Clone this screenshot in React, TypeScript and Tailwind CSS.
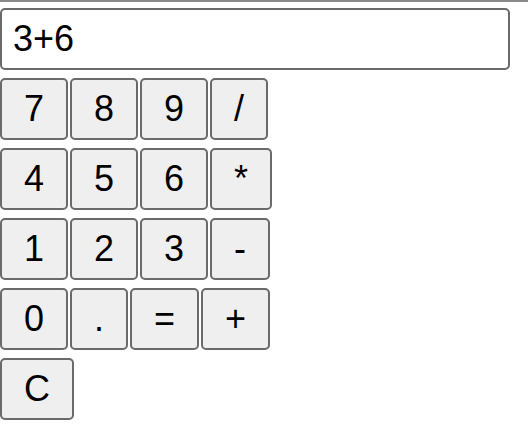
import React from "react";

const rows: string[][] = [
  ["7", "8", "9", "/"],
  ["4", "5", "6", "*"],
  ["1", "2", "3", "-"],
  ["0", ".", "=", "+"],
  ["C"],
];

export default function App() {
  return (
    <div className="w-[528px] h-[443px] bg-white overflow-hidden" style={{ fontFamily: '"Liberation Sans", Arial, sans-serif' }}>
      <div className="h-[2px] w-full bg-[#8a8a8a]" />
      <div className="flex flex-col gap-2 pt-[6px]">
        <div className="w-[510px] h-[62px] border-2 border-[#6a6a6a] rounded-[5px] flex items-center pl-[11px] text-[36px] text-black leading-none">
          3+6
        </div>
        {rows.map((row, i) => (
          <div key={i} className="flex gap-[2px]">
            {row.map((k) => (
              <button
                key={k}
                className="h-[62px] px-[22px] border-2 border-[#6a6a6a] rounded-[5px] bg-[#efefef] text-[36px] text-black leading-none"
                style={{ fontFamily: '"Liberation Sans", Arial, sans-serif' }}
              >
                {k}
              </button>
            ))}
          </div>
        ))}
      </div>
    </div>
  );
}
